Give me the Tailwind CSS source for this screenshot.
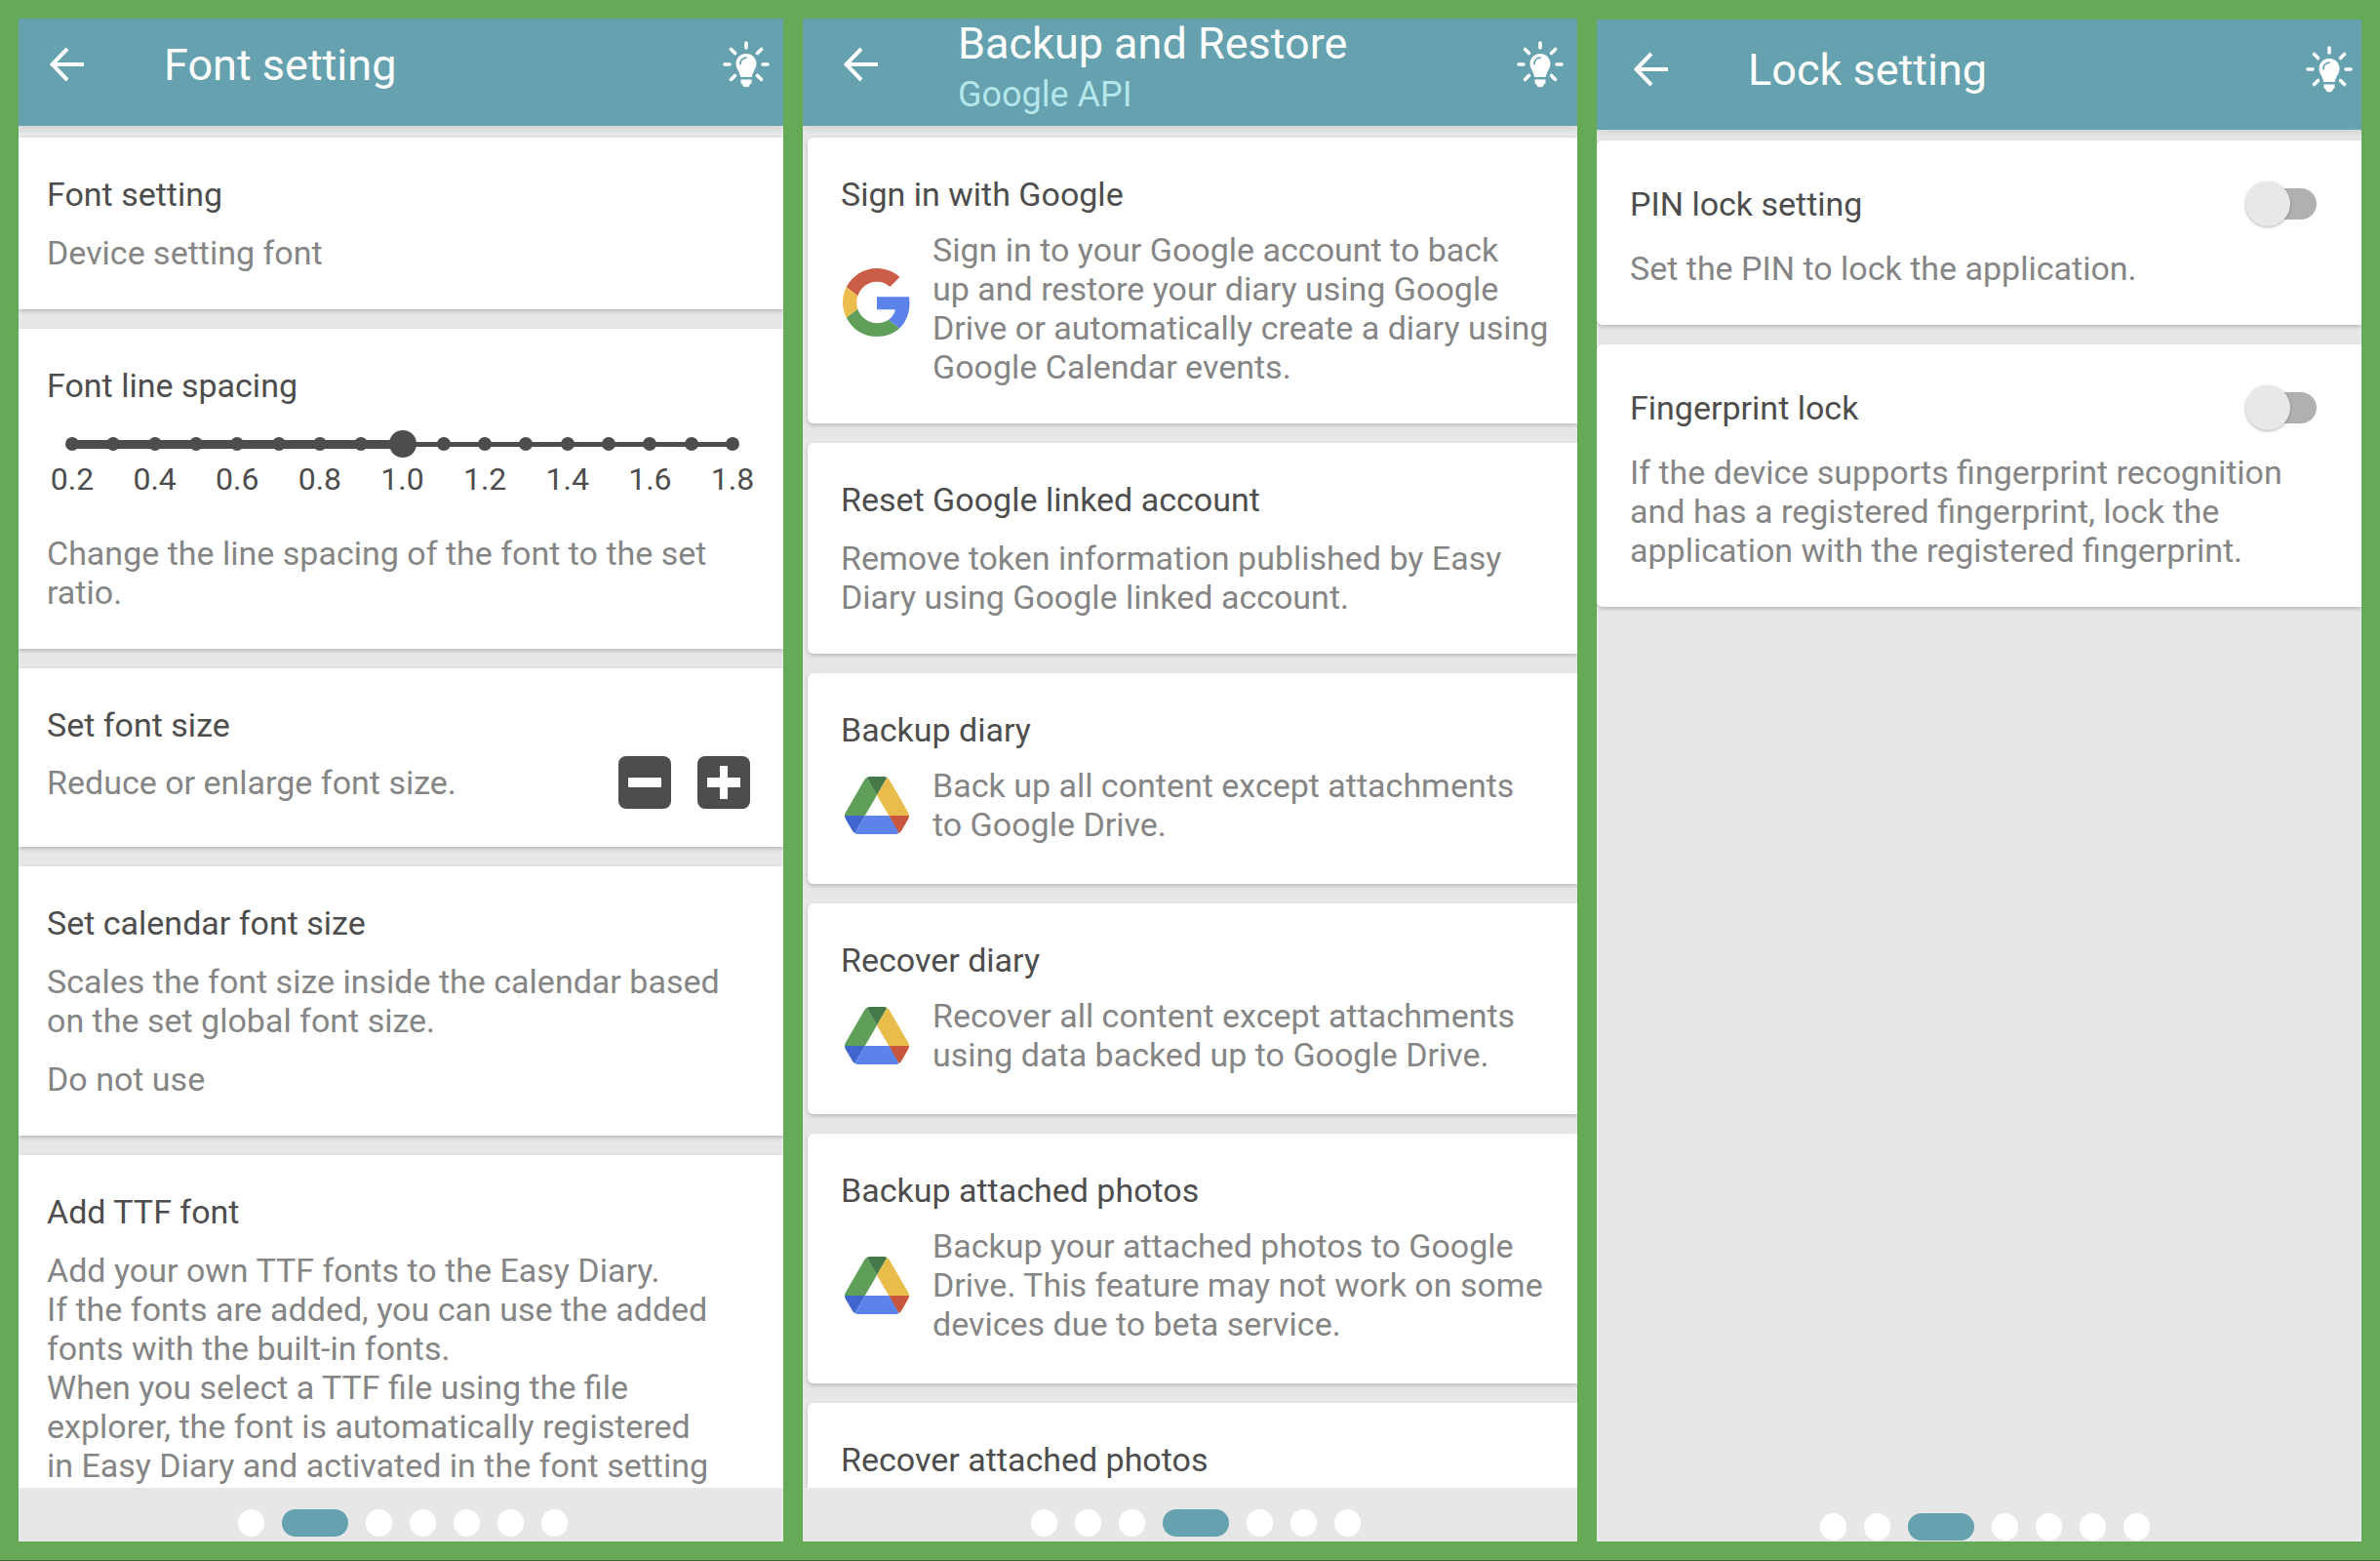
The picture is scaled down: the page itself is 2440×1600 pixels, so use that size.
<!DOCTYPE html>
<html lang="en">

<head>
    <meta charset="UTF-8">
    <meta name="viewport" content="width=device-width, initial-scale=1.0">
    <title>Easy Diary - Settings</title>
    <script src="https://cdn.jsdelivr.net/npm/@tailwindcss/browser@4"></script>
</head>

<body class="bg-[#66aa57] font-['Roboto',sans-serif] text-[34px] leading-10 text-[#858585]">
    <!-- Shared icons -->
    <svg class="hidden">
        <symbol id="icon-back" viewBox="0 0 36 36">
            <path d="M18 2 2.500 18 18 34M3 18h32" fill="none" stroke="#fff" stroke-width="4" />
        </symbol>
        <symbol id="icon-bulb" viewBox="0 0 48 48">
            <g stroke="#fff" stroke-width="3.600" stroke-linecap="round">
                <path d="M24 2v5M2 24h5M41 24h5M8.500 8.500l4 4M39.500 8.500l-4 4M8.500 39.500l4-4M39.500 39.500l-4-4" />
            </g>
            <path d="M24 13c-6 0-10.500 4.500-10.500 10.300 0 5.200 3.600 7.700 4.700 13.700h11.600c1.100-6 4.700-8.500 4.700-13.700C34.500 17.500 30 13 24 13z" fill="#fff" />
            <path d="M18 23.500c0-3.500 2.500-6 6-6.300" fill="none" stroke="#65a1ae" stroke-width="1.800" stroke-linecap="round" />
            <path d="M18.500 39.500h11v4c-1 0-1.800.8-2.200 2.200-.8 2-5.800 2-6.600 0-.4-1.400-1.200-2.200-2.200-2.200z" fill="#fff" />
        </symbol>
        <symbol id="icon-google" viewBox="0 0 48 48">
            <path fill="#cb5d46" d="M24 9.500c3.540 0 6.710 1.220 9.210 3.600l6.850-6.850C35.900 2.380 30.470 0 24 0 14.620 0 6.510 5.380 2.560 13.220l7.980 6.190C12.430 13.720 17.740 9.500 24 9.500z" />
            <path fill="#5b83ea" d="M46.980 24.550c0-1.570-.15-3.090-.38-4.550H24v9.020h12.940c-.58 2.960-2.260 5.480-4.780 7.180l7.730 6c4.510-4.180 7.090-10.360 7.090-17.650z" />
            <path fill="#eabd4c" d="M10.530 28.590c-.48-1.450-.76-2.990-.76-4.590s.27-3.140.76-4.590l-7.980-6.190C.92 16.460 0 20.120 0 24c0 3.880.92 7.540 2.560 10.780l7.970-6.190z" />
            <path fill="#5f9f5a" d="M24 48c6.480 0 11.930-2.130 15.890-5.810l-7.730-6c-2.150 1.450-4.920 2.300-8.160 2.300-6.260 0-11.570-4.220-13.470-9.910l-7.980 6.190C6.510 42.620 14.620 48 24 48z" />
        </symbol>
        <symbol id="icon-drive" viewBox="0 0 87.300 78">
            <path fill="#4065cc" d="m6.600 66.850 3.850 6.650c.8 1.400 1.950 2.500 3.300 3.300l13.750-23.800h-27.500c0 1.550.4 3.100 1.200 4.500z" />
            <path fill="#5f9f5a" d="m43.650 25-13.750-23.800c-1.350.8-2.500 1.900-3.300 3.300l-25.400 44a9.060 9.060 0 0 0-1.200 4.500h27.500z" />
            <path fill="#c9573f" d="m73.550 76.800c1.350-.8 2.500-1.900 3.300-3.300l1.600-2.750 7.650-13.250c.8-1.400 1.200-2.950 1.200-4.500h-27.502l5.852 11.500z" />
            <path fill="#45794a" d="m43.650 25 13.750-23.800c-1.350-.8-2.900-1.200-4.500-1.200h-18.500c-1.600 0-3.150.45-4.500 1.200z" />
            <path fill="#5b83ea" d="m59.800 53h-32.300l-13.750 23.800c1.350.8 2.900 1.200 4.500 1.200h50.800c1.600 0 3.150-.45 4.500-1.200z" />
            <path fill="#e8bd4c" d="m73.400 26.500-12.700-22c-.8-1.400-1.950-2.500-3.300-3.300l-13.750 23.800 16.150 28h27.450c0-1.550-.4-3.100-1.200-4.500z" />
        </symbol>
    </svg>

    <div class="h-screen grid grid-cols-[784fr_794fr_784fr] gap-5 px-[19px] pt-[19px] pb-[19px] border-b border-[#3d6634]">

        <!-- Font setting -->
        <section class="flex flex-col min-w-0 min-h-0 overflow-hidden bg-[#e7e7e7]">
            <header class="relative shrink-0 flex items-center h-[110px] pl-8 pr-3.5 pb-4 bg-[#65a1ae] shadow-[0_2px_8px_rgba(0,0,0,0.12)]">
                <button aria-label="Back" class="mr-[81px]"><svg class="size-9"><use href="#icon-back" /></svg></button>
                <h1 class="flex-1 pt-0.5 text-[45px] leading-[52px] text-white">Font setting</h1>
                <button aria-label="Tips"><svg class="size-12"><use href="#icon-bulb" /></svg></button>
            </header>
            <main class="flex-1 min-h-0 overflow-hidden flex flex-col gap-5 pt-3 *:shrink-0">
                <article class="bg-white pl-[29px] pr-[26px] py-[38px] shadow-[0_2px_4px_rgba(0,0,0,0.2)]">
                    <h2 class="text-[#4d4d4d]">Font setting</h2>
                    <p class="mt-5">Device setting font</p>
                </article>
                <article class="bg-white pl-[29px] pr-[26px] py-[38px] shadow-[0_2px_4px_rgba(0,0,0,0.2)]">
                    <h2 class="text-[#4d4d4d]"><label for="line-spacing">Font line spacing</label></h2>
                    <div class="mt-[26px] mx-[19px] h-7 relative flex items-center">
                        <div class="absolute inset-x-1 h-[5px] bg-[#4d4d4d]"></div>
                        <div class="absolute left-1 right-1/2 h-[9px] bg-[#4d4d4d]"></div>
                        <div class="absolute inset-x-0 flex justify-between *:size-3.5 *:rounded-full *:bg-[#4d4d4d]">
                            <i></i><i></i><i></i><i></i><i></i><i></i><i></i><i></i><i></i><i></i><i></i><i></i><i></i><i></i><i></i><i></i><i></i>
                        </div>
                        <input id="line-spacing" type="range" min="0.2" max="1.8" step="0.1" value="1"
                            class="absolute -left-1.5 -right-1.5 h-7 appearance-none bg-transparent [&::-webkit-slider-thumb]:appearance-none [&::-webkit-slider-thumb]:size-7 [&::-webkit-slider-thumb]:rounded-full [&::-webkit-slider-thumb]:bg-[#4d4d4d]">
                    </div>
                    <div class="mt-0.5 flex justify-between text-[32px] text-[#4d4d4d] *:w-[52px] *:text-center">
                        <span>0.2</span><span>0.4</span><span>0.6</span><span>0.8</span><span>1.0</span><span>1.2</span><span>1.4</span><span>1.6</span><span>1.8</span>
                    </div>
                    <p class="mt-9">Change the line spacing of the font to the set ratio.</p>
                </article>
                <article class="bg-white pl-[29px] pr-[34px] pt-[38px] pb-[39px] shadow-[0_2px_4px_rgba(0,0,0,0.2)]">
                    <h2 class="text-[#4d4d4d]">Set font size</h2>
                    <div class="mt-3 flex items-center gap-[27px]">
                        <p class="flex-1">Reduce or enlarge font size.</p>
                        <button aria-label="Reduce" class="size-[54px] rounded-lg bg-[#4d4d4d]">
                            <svg viewBox="0 0 54 54"><rect x="10" y="22" width="34" height="10" rx="1" fill="#fff" /></svg>
                        </button>
                        <button aria-label="Enlarge" class="size-[54px] rounded-lg bg-[#4d4d4d]">
                            <svg viewBox="0 0 54 54"><path d="M23 10h8v12h13v10H31v12h-8V32H10V22h13z" fill="#fff" /></svg>
                        </button>
                    </div>
                </article>
                <article class="bg-white pl-[29px] pr-[26px] py-[38px] shadow-[0_2px_4px_rgba(0,0,0,0.2)]">
                    <h2 class="text-[#4d4d4d]">Set calendar font size</h2>
                    <p class="mt-5">Scales the font size inside the calendar based on the set global font size.</p>
                    <p class="mt-5">Do not use</p>
                </article>
                <article class="bg-white pl-[29px] pr-[26px] py-[38px] shadow-[0_2px_4px_rgba(0,0,0,0.2)]">
                    <h2 class="text-[#4d4d4d]">Add TTF font</h2>
                    <p class="mt-5">Add your own TTF fonts to the Easy Diary.<br>
                        If the fonts are added, you can use the added fonts with the built-in fonts.<br>
                        When you select a TTF file using the file explorer, the font is automatically registered<br>
                        in Easy Diary and activated in the font setting</p>
                </article>
            </main>
            <footer class="shrink-0 flex justify-center gap-[18px] h-[55px] pt-[22px] pl-1 *:w-[27px] *:h-7 *:rounded-full">
                <button aria-label="Page 1" class="bg-white"></button>
                <button aria-label="Page 2" class="w-[68px]! bg-[#65a1ae]"></button>
                <button aria-label="Page 3" class="bg-white"></button>
                <button aria-label="Page 4" class="bg-white"></button>
                <button aria-label="Page 5" class="bg-white"></button>
                <button aria-label="Page 6" class="bg-white"></button>
                <button aria-label="Page 7" class="bg-white"></button>
            </footer>
        </section>

        <!-- Backup and Restore -->
        <section class="flex flex-col min-w-0 min-h-0 overflow-hidden bg-[#e7e7e7]">
            <header class="relative shrink-0 flex items-center h-[110px] pl-[42px] pr-3.5 pb-4 bg-[#65a1ae] shadow-[0_2px_8px_rgba(0,0,0,0.12)]">
                <button aria-label="Back" class="mr-[81px]"><svg class="size-9"><use href="#icon-back" /></svg></button>
                <div class="flex-1 self-start">
                    <h1 class="text-[45px] leading-[52px] text-white">Backup and Restore</h1>
                    <p class="mt-1.5 text-[36px] text-[#b4e6ec]">Google API</p>
                </div>
                <button aria-label="Tips"><svg class="size-12"><use href="#icon-bulb" /></svg></button>
            </header>
            <main class="flex-1 min-h-0 overflow-hidden flex flex-col gap-5 pt-3 pl-[5px] *:shrink-0">
                <article class="bg-white rounded-l-md pl-[34px] pr-7 py-[38px] shadow-[0_2px_4px_rgba(0,0,0,0.2)]">
                    <h2 class="text-[#4d4d4d]">Sign in with Google</h2>
                    <div class="mt-[17px] flex items-center gap-5">
                        <svg class="shrink-0 w-[74px] h-[82px] pb-3"><use href="#icon-google" /></svg>
                        <p>Sign in to your Google account to back<br>
                            up and restore your diary using Google Drive or automatically create a diary using Google Calendar events.</p>
                    </div>
                </article>
                <article class="bg-white rounded-l-md pl-[34px] pr-7 py-[38px] shadow-[0_2px_4px_rgba(0,0,0,0.2)]">
                    <h2 class="text-[#4d4d4d]">Reset Google linked account</h2>
                    <p class="mt-5">Remove token information published by Easy Diary using Google linked account.</p>
                </article>
                <article class="bg-white rounded-l-md pl-[34px] pr-7 pt-[38px] pb-[41px] shadow-[0_2px_4px_rgba(0,0,0,0.2)]">
                    <h2 class="text-[#4d4d4d]">Backup diary</h2>
                    <div class="mt-[17px] flex items-center gap-5">
                        <svg class="shrink-0 w-[74px] h-[59px]"><use href="#icon-drive" /></svg>
                        <p>Back up all content except attachments to Google Drive.</p>
                    </div>
                </article>
                <article class="bg-white rounded-l-md pl-[34px] pr-7 pt-[38px] pb-[41px] shadow-[0_2px_4px_rgba(0,0,0,0.2)]">
                    <h2 class="text-[#4d4d4d]">Recover diary</h2>
                    <div class="mt-[17px] flex items-center gap-5">
                        <svg class="shrink-0 w-[74px] h-[59px]"><use href="#icon-drive" /></svg>
                        <p>Recover all content except attachments using data backed up to Google Drive.</p>
                    </div>
                </article>
                <article class="bg-white rounded-l-md pl-[34px] pr-7 pt-[38px] pb-[41px] shadow-[0_2px_4px_rgba(0,0,0,0.2)]">
                    <h2 class="text-[#4d4d4d]">Backup attached photos</h2>
                    <div class="mt-[17px] flex items-center gap-5">
                        <svg class="shrink-0 w-[74px] h-[59px]"><use href="#icon-drive" /></svg>
                        <p>Backup your attached photos to Google Drive. This feature may not work on some devices due to beta service.</p>
                    </div>
                </article>
                <article class="bg-white rounded-tl-md pl-[34px] pr-7 pt-[38px] pb-[41px] shadow-[0_2px_4px_rgba(0,0,0,0.2)]">
                    <h2 class="text-[#4d4d4d]">Recover attached photos</h2>
                </article>
            </main>
            <footer class="shrink-0 flex justify-center gap-[18px] h-[55px] pt-[22px] pl-3 *:w-[27px] *:h-7 *:rounded-full">
                <button aria-label="Page 1" class="bg-white"></button>
                <button aria-label="Page 2" class="bg-white"></button>
                <button aria-label="Page 3" class="bg-white"></button>
                <button aria-label="Page 4" class="w-[68px]! bg-[#65a1ae]"></button>
                <button aria-label="Page 5" class="bg-white"></button>
                <button aria-label="Page 6" class="bg-white"></button>
                <button aria-label="Page 7" class="bg-white"></button>
            </footer>
        </section>

        <!-- Lock setting -->
        <section class="flex flex-col min-w-0 min-h-0 mt-px overflow-hidden bg-[#e7e7e7]">
            <header class="relative shrink-0 flex items-center h-[113px] pl-[38px] pr-[9px] pb-3 bg-[#65a1ae] shadow-[0_2px_8px_rgba(0,0,0,0.12)]">
                <button aria-label="Back" class="mr-[81px]"><svg class="size-9"><use href="#icon-back" /></svg></button>
                <h1 class="flex-1 pt-0.5 text-[45px] leading-[52px] text-white">Lock setting</h1>
                <button aria-label="Tips"><svg class="size-12"><use href="#icon-bulb" /></svg></button>
            </header>
            <main class="flex-1 min-h-0 overflow-hidden flex flex-col gap-5 pt-[11px] *:shrink-0">
                <article class="bg-white rounded-l-md pl-[34px] pr-8 py-[38px] shadow-[0_2px_4px_rgba(0,0,0,0.2)]">
                    <div class="flex items-center justify-between pr-3.5">
                        <h2 class="text-[#4d4d4d]"><label for="pin-lock">PIN lock setting</label></h2>
                        <input id="pin-lock" type="checkbox" role="switch"
                            class="relative appearance-none w-[73px] h-[54px] before:absolute before:left-2 before:right-0 before:top-[11px] before:h-8 before:rounded-full before:bg-[#b0b0b0] after:absolute after:left-0 after:top-1 after:size-[46px] after:rounded-full after:bg-[#e8e8e8] after:shadow-[0_1px_3px_rgba(0,0,0,0.3)]">
                    </div>
                    <p class="mt-[19px]">Set the PIN to lock the application.</p>
                </article>
                <article class="bg-white rounded-l-md pl-[34px] pr-8 py-[38px] shadow-[0_2px_4px_rgba(0,0,0,0.2)]">
                    <div class="flex items-center justify-between pr-3.5">
                        <h2 class="text-[#4d4d4d]"><label for="fingerprint-lock">Fingerprint lock</label></h2>
                        <input id="fingerprint-lock" type="checkbox" role="switch"
                            class="relative appearance-none w-[73px] h-[54px] before:absolute before:left-2 before:right-0 before:top-[11px] before:h-8 before:rounded-full before:bg-[#b0b0b0] after:absolute after:left-0 after:top-1 after:size-[46px] after:rounded-full after:bg-[#e8e8e8] after:shadow-[0_1px_3px_rgba(0,0,0,0.3)]">
                    </div>
                    <p class="mt-[19px]">If the device supports fingerprint recognition and has a registered fingerprint, lock the application with the registered fingerprint.</p>
                </article>
            </main>
            <footer class="shrink-0 flex justify-center gap-[18px] h-[55px] pt-[26px] pl-3 *:w-[27px] *:h-7 *:rounded-full">
                <button aria-label="Page 1" class="bg-white"></button>
                <button aria-label="Page 2" class="bg-white"></button>
                <button aria-label="Page 3" class="w-[68px]! bg-[#65a1ae]"></button>
                <button aria-label="Page 4" class="bg-white"></button>
                <button aria-label="Page 5" class="bg-white"></button>
                <button aria-label="Page 6" class="bg-white"></button>
                <button aria-label="Page 7" class="bg-white"></button>
            </footer>
        </section>
    </div>
</body>

</html>
